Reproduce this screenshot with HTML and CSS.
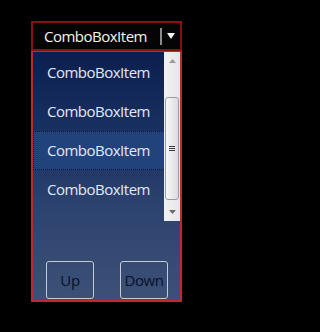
FILE: index.html
```html
<!DOCTYPE html>
<html>
<head>
<meta charset="utf-8">
<link rel="stylesheet" href="styles.css">
</head>
<body>
<div class="combo">
  <div class="combo-head">
    <span class="combo-value">ComboBoxItem</span>
    <span class="combo-sep"></span>
    <svg class="combo-arrow" width="8" height="6" viewBox="0 0 8 6"><path d="M0 0 L8 0 L4 6 Z" fill="#f4f4f4"/></svg>
  </div>
  <div class="drop">
    <div class="list-wrap">
      <ul class="items">
        <li class="item">ComboBoxItem</li>
        <li class="item">ComboBoxItem</li>
        <li class="item selected">ComboBoxItem</li>
        <li class="item">ComboBoxItem</li>
      </ul>
      <div class="scrollbar">
        <svg class="sb-arrow" width="7" height="4" viewBox="0 0 7 4"><path d="M0 4 L7 4 L3.5 0 Z" fill="#9a9a9a"/></svg>
        <div class="sb-track">
          <div class="thumb">
            <span class="grip"></span><span class="grip"></span><span class="grip"></span>
          </div>
        </div>
        <svg class="sb-arrow" width="7" height="4" viewBox="0 0 7 4"><path d="M0 0 L7 0 L3.5 4 Z" fill="#6a6a6a"/></svg>
      </div>
    </div>
    <div class="buttons">
      <button class="btn">Up</button>
      <button class="btn">Down</button>
    </div>
  </div>
</div>
</body>
</html>
```

FILE: styles.css
```css
html, body {
  margin: 0;
  padding: 0;
  background: #000;
}
body {
  width: 216px;
  height: 332px;
  font-family: "Open Sans", "Noto Sans", sans-serif;
  overflow: hidden;
}
.combo {
  margin: 21px 0 0 31px;
  width: 151px;
}
.combo-head {
  box-sizing: border-box;
  height: 30px;
  border: 2px solid #8c0d12;
  background: #050505;
  display: flex;
  align-items: center;
  padding-left: 11px;
}
.combo-value {
  color: #f6f5ea;
  font-size: 15px;
  font-weight: 500;
  line-height: 20px;
  letter-spacing: -0.5px;
  width: 116px;
}
.combo-sep {
  width: 2px;
  height: 17px;
  background: #8a8a8a;
  margin-right: 5px;
}
.combo-arrow {
  display: block;
}
.drop {
  box-sizing: border-box;
  height: 251px;
  border: 2px solid #c0282e;
  border-top: 1px solid #c0282e;
  background: linear-gradient(to bottom, #0b1f4e 0%, #1a3263 35%, #2e4470 65%, #3b5177 100%);
  display: flex;
  flex-direction: column;
}
.list-wrap {
  display: flex;
  height: 169px;
}
.items {
  list-style: none;
  margin: 0;
  padding: 1px 0 0 0;
  flex: 1;
}
.item {
  box-sizing: border-box;
  height: 39px;
  line-height: 39px;
  padding-left: 14px;
  color: #e2e9f8;
  font-size: 15px;
  font-weight: 500;
  letter-spacing: -0.5px;
}
.item.selected {
  background: #22427c;
  border-top: 1px dotted #0a1634;
  border-bottom: 1px dotted #0a1634;
  border-left: 1px dotted #0a1634;
  line-height: 37px;
  padding-left: 13px;
}
.scrollbar {
  width: 16px;
  background: linear-gradient(to right, #f2f2f2, #e6e6e6);
  display: flex;
  flex-direction: column;
  align-items: center;
}
.sb-arrow {
  display: block;
  margin: 7px 0;
}
.sb-track {
  flex: 1;
  width: 100%;
  padding-top: 27px;
  padding-bottom: 2px;
  box-sizing: border-box;
  display: flex;
  flex-direction: column;
}
.thumb {
  box-sizing: border-box;
  margin: 0 1px;
  height: 103px;
  border: 1px solid #9c9c9c;
  border-radius: 3px;
  background: linear-gradient(to right, #f8f8f8, #dcdcdc);
  display: flex;
  flex-direction: column;
  align-items: center;
  justify-content: center;
  gap: 1px;
}
.grip {
  display: block;
  width: 6px;
  height: 1px;
  background: #3c3c3c;
}
.buttons {
  margin-top: auto;
  display: flex;
  gap: 26px;
  padding: 0 0 0 13px;
  margin-bottom: 1px;
}
.btn {
  box-sizing: border-box;
  width: 48px;
  height: 38px;
  border: 1.5px solid #c6cad2;
  border-radius: 3px;
  background: transparent;
  color: #08102a;
  font-family: "Open Sans", "Noto Sans", sans-serif;
  font-size: 15px;
  font-weight: 500;
  letter-spacing: -0.4px;
  padding: 0;
  white-space: nowrap;
}
```
